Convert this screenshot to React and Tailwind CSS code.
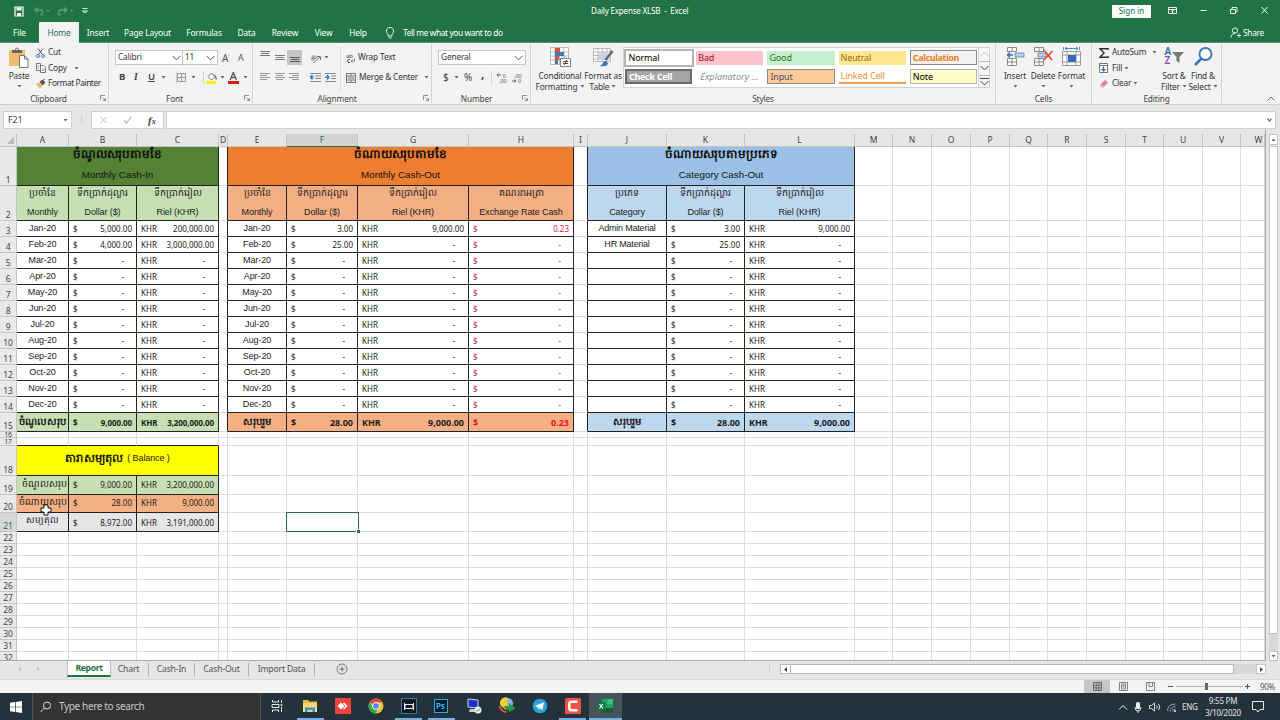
import clsx from 'clsx';

const GRID = 'grid grid-rows-1 grid-cols-[17px_52px_68px_82px_9px_59px_71px_111px_105px_14px_79px_78px_110px_38px_39px_39px_39px_38px_39px_39px_38px_39px_38px_24px]';
const LETTERS = 'ABCDEFGHIJKLMNOPQRSTUVW'.split('');
const MONTHS = ['Jan', 'Feb', 'Mar', 'Apr', 'May', 'Jun', 'Jul', 'Aug', 'Sep', 'Oct', 'Nov', 'Dec'];

const CASH_IN = [['5,000.00', '200,000.00'], ['4,000.00', '3,000,000.00']];
const CASH_OUT = [['3.00', '9,000.00', '0.23'], ['25.00', '-', '-']];
const CATEGORY = [['Admin Material', '3.00', '9,000.00'], ['HR Material', '25.00', '-']];

const TABS = [
  ['File', 'w-[39px]'],
  ['Home', 'w-[40px] bg-[#f3f3f3] text-[#217346]'],
  ['Insert', 'w-[38px]'],
  ['Page Layout', 'w-[61px]'],
  ['Formulas', 'w-[52px]'],
  ['Data', 'w-[33px]'],
  ['Review', 'w-[44px]'],
  ['View', 'w-[33px]'],
  ['Help', 'w-[36px]'],
];

const Icon = ({ w, h, children, className }) => (
  <svg width={w} height={h} viewBox={`0 0 ${w} ${h}`} fill="none" className={clsx('shrink-0', className)}>
    {children}
  </svg>
);

const Caret = ({ className }) => (
  <Icon w={5} h={3} className={className}>
    <path d="M0.5 0h4L2.5 2.5z" fill="#666" />
  </Icon>
);

const Chevron = ({ className }) => (
  <Icon w={9} h={6} className={className}>
    <path d="M0.5 0.8l4 4 4-4" stroke="#555" />
  </Icon>
);

const Launcher = () => (
  <Icon w={6} h={6} className="absolute right-[2px] bottom-[2px]">
    <path d="M0.5 5V0.5H5M2.5 2.5l3 3M5.5 3v2.5H3" stroke="#777" strokeWidth="0.8" />
  </Icon>
);

const Group = ({ label, className, launcher, labelClass, children }) => (
  <div className={clsx('relative flex flex-col h-[59px] border-r border-[#d2d2d2] shrink-0', className)}>
    <div className="flex h-[49px] shrink-0">{children}</div>
    <div className={clsx('pt-px text-center leading-[10px] text-[#444]', labelClass)}>{label}</div>
    {launcher && <Launcher />}
  </div>
);

const BigButton = ({ icon, lines, className, caret }) => (
  <div className={clsx('flex flex-col items-center shrink-0 leading-[11px] whitespace-nowrap', className)}>
    <div className="h-[26px] pt-[3px]">{icon}</div>
    <div>{lines[0]}</div>
    {lines[1] ? (
      <div className="flex items-center gap-[2px]">{lines[1]}<Caret /></div>
    ) : (
      caret && <Caret className="mt-[4px]" />
    )}
  </div>
);

const Lines = ({ rows, color = '#777' }) => (
  <Icon w={10} h={9}>
    {rows.map(([x, w], i) => (
      <rect key={i} x={x} y={i * 2} width={w} height="1" fill={color} />
    ))}
  </Icon>
);

const TitleBar = () => (
  <div className="flex h-[22px] items-center text-[8px] text-white">
    <Icon w={100} h={22}>
      <path d="M15 7h8v9h-8z" stroke="#fff" strokeWidth="1.2" />
      <path d="M16.5 7.5h5v3h-5zM17 13h4v3h-4z" fill="#fff" />
      <path d="M38 7.5L35 10l3 2.5M35.5 10h5q2 0 2 2.5t-2 2.5" stroke="#5f9c7a" strokeWidth="1.3" />
      <path d="M64 7.5l3 2.5-3 2.5M66.5 10h-5q-3 0-3 2.5t2 2.5" stroke="#5f9c7a" strokeWidth="1.3" />
      <path d="M46 10h4l-2 2zM69.5 10h4l-2 2z" fill="#5f9c7a" />
      <path d="M82.5 8.5h5M82.5 11h5L85 13z" stroke="#fff" strokeWidth="0.8" />
    </Icon>
    <div className="ml-[491px] w-[97px] whitespace-pre tracking-[-0.18px]">Daily Expense XLSB  -  Excel</div>
    <div className="ml-[424px] flex h-[13px] w-[39px] items-center justify-center bg-white text-[#217346]">Sign in</div>
    <Icon w={128} h={22}>
      <path d="M17.5 7.5h8v6h-8zM17 9.5h9M21.5 13v-3M20 11.5l1.5-1.5 1.5 1.5" stroke="#e6f0ea" />
      <path d="M49.5 10.5h6" stroke="#fff" />
      <path d="M79.5 9.5h5v4h-5zM81 9.5v-2h5V12h-1.5" stroke="#fff" strokeWidth="0.9" />
      <path d="M110.5 7l6 6.5M116.5 7l-6 6.5" stroke="#fff" />
    </Icon>
  </div>
);

const TabBar = () => (
  <div className="flex h-[21px] items-center text-[8.4px] tracking-[-0.15px] text-white">
    {TABS.map(([name, cls]) => (
      <div key={name} className={clsx('flex h-full items-center justify-center whitespace-nowrap pt-px', cls)}>{name}</div>
    ))}
    <Icon w={10} h={13} className="ml-[9px]">
      <path d="M3 8.5C0.5 6 1 1.5 5 1.5s4.500 4.500 2 7V10H3zM3.5 11.8h3" stroke="#fff" strokeWidth="0.9" />
    </Icon>
    <div className="ml-[8px] grow whitespace-nowrap pt-px tracking-[-0.4px]">Tell me what you want to do</div>
    <Icon w={11} h={11} className="mr-[2px]">
      <circle cx="5" cy="3.5" r="2.6" stroke="#fff" strokeWidth="0.9" />
      <path d="M1 10.5c0-3 2-4 4-4M7 8.5h4M9 6.5v4" stroke="#fff" strokeWidth="0.9" />
    </Icon>
    <div className="mr-[16px] pt-px tracking-[-0.3px]">Share</div>
  </div>
);

const ClipboardGroup = () => (
  <Group label="Clipboard" className="w-[109px]" labelClass="pr-[11px]" launcher>
    <BigButton
      className="ml-[6px] w-[26px]"
      lines={['Paste']}
      caret
      icon={
        <Icon w={20} h={21}>
          <rect x="0" y="3" width="16" height="16" fill="#edbd6b" />
          <path d="M3 3h10v3H3z" fill="#666" />
          <circle cx="8" cy="2.5" r="1.5" stroke="#666" />
          <path d="M10.5 8.5h5L19 12v8.5h-8.5zM15.5 8.5V12H19" fill="#fff" stroke="#777" />
        </Icon>
      }
    />
    <div className="ml-[4px] mt-[1px] flex flex-col whitespace-nowrap text-[#333]">
      <div className="flex h-[15px] items-center gap-[3px]">
        <Icon w={9} h={10}>
          <path d="M2 0.5l4.5 6M7 0.5l-4.5 6" stroke="#555" />
          <circle cx="2" cy="8" r="1.5" stroke="#4a78b0" />
          <circle cx="7" cy="8" r="1.5" stroke="#4a78b0" />
        </Icon>
        Cut
      </div>
      <div className="flex h-[16px] items-center gap-[2px]">
        <Icon w={10} h={10}>
          <path d="M0.5 0.5h4v7h-4zM4.5 2.5h3l2 2v5h-5z" fill="#fff" stroke="#777" />
          <path d="M1.5 3h2M1.5 5h2M6 6h2.5M6 7.5h2.5" stroke="#4a78b0" strokeWidth="0.7" />
        </Icon>
        Copy<Caret className="ml-[5px]" />
      </div>
      <div className="flex h-[15px] items-center gap-[2px] tracking-[-0.4px]">
        <Icon w={10} h={10}>
          <path d="M0 5l4-2 3 3-3 3.5z" fill="#edb66a" />
          <path d="M4 3l2-2 3 2-2 3zM7 1l2-1" fill="#555" stroke="#555" strokeWidth="0.8" />
        </Icon>
        Format Painter
      </div>
    </div>
  </Group>
);

const FontGroup = () => (
  <Group label="Font" className="w-[144px]" labelClass="pr-[12px]" launcher>
    <div className="ml-[6px] mt-[6px]">
      <div className="flex items-center">
        <div className="flex h-[15px] w-[68px] items-center justify-between border border-[#c6c6c6] bg-white pl-[2px] pr-[1px]">Calibri<Chevron /></div>
        <div className="flex h-[15px] w-[35px] items-center justify-between border border-l-0 border-[#c6c6c6] bg-white pl-[2px] pr-[2px]">11<Chevron /></div>
        <div className="ml-[4px] w-[16px] text-[10px] leading-none text-[#555]">A<sup className="text-[6px]">˄</sup></div>
        <div className="w-[12px] text-[9px] leading-none text-[#555]">A<sup className="text-[6px]">˅</sup></div>
      </div>
      <div className="mt-[5px] flex h-[15px] items-center text-[9.5px] text-[#444]">
        <b className="ml-[4px] w-[15px]">B</b>
        <i className="w-[14px] font-['Liberation_Serif',serif] font-bold">I</i>
        <u className="w-[13px] font-semibold">U</u>
        <Caret />
        <div className="ml-[10px] h-[13px] w-px bg-[#d2d2d2]" />
        <Icon w={9} h={9}>
          <path d="M0.5 0.5h8v8h-8zM4.5 0.5v8M0.5 4.5h8" stroke="#999" />
        </Icon>
        <Caret className="ml-[5px]" />
        <div className="ml-[7px] h-[13px] w-px bg-[#d2d2d2]" />
        <Icon w={11} h={12} className="ml-[2px]">
          <path d="M2 4.5L5.5 1 9 4.5 5.5 8z" fill="#fff" stroke="#777" />
          <path d="M8 3q2.5 1 2 4.5" stroke="#3f72b5" strokeWidth="1.3" />
          <rect y="9" width="10" height="3" fill="#ffee1a" />
        </Icon>
        <Caret className="ml-[3px]" />
        <Icon w={11} h={12} className="ml-[3px]">
          <path d="M2 8L5.300 0.500 8.5 8M3.300 5.500h4" stroke="#555" strokeWidth="1.3" />
          <rect y="9" width="11" height="3" fill="#d11a1a" />
        </Icon>
        <Caret className="ml-[4px]" />
      </div>
    </div>
  </Group>
);

const AlignmentGroup = () => (
  <Group label="Alignment" className="w-[179px]" labelClass="pr-[10px]" launcher>
    <div className="mt-[6px] w-[87px] shrink-0 pl-[7px]">
      <div className="flex h-[15px] items-center">
        <div className="-mt-[4px] w-[15px]"><Lines rows={[[0, 10], [1, 8], [0, 10]]} /></div>
        <div className="mt-[3px] w-[12px]"><Lines rows={[[0, 10], [1, 8], [0, 10]]} /></div>
        <div className="flex h-[15px] w-[15px] items-end justify-center bg-[#c5c5c5] pb-px"><Lines rows={[[0, 0], [0, 10], [1, 8], [0, 10]]} color="#555" /></div>
        <Icon w={12} h={12} className="ml-[8px]">
          <text x="1" y="7" fontSize="6" fill="#444" transform="rotate(-35 5 7)">ab</text>
          <path d="M3 11l7-6M10.5 8V4.5H7" stroke="#777" />
        </Icon>
        <Caret className="ml-[2px]" />
      </div>
      <div className="mt-[5px] flex h-[15px] items-center">
        <div className="w-[15px]"><Lines rows={[[0, 10], [0, 7], [0, 10], [0, 7], [0, 0]]} color="#999" /></div>
        <div className="w-[14px]"><Lines rows={[[0, 10], [1, 7], [0, 10], [1, 7], [0, 0]]} color="#999" /></div>
        <div className="w-[21px]"><Lines rows={[[0, 10], [3, 7], [0, 10], [3, 7], [0, 0]]} color="#999" /></div>
        <Icon w={11} h={9}>
          <path d="M0 0.5h11M5 3h6M5 5.5h6M0 8.5h11" stroke="#888" />
          <path d="M0 4.2h4M2.5 2L0.5 4.2l2 2.3" stroke="#2f6db5" strokeWidth="1.2" />
        </Icon>
        <Icon w={11} h={9} className="ml-[4px]">
          <path d="M0 0.5h11M6 3h5M6 5.5h5M0 8.5h11" stroke="#888" />
          <path d="M0 4.2h4M2 2l2 2.2-2 2.3" stroke="#2f6db5" strokeWidth="1.2" />
        </Icon>
      </div>
    </div>
    <div className="mt-[3px] h-[45px] w-px bg-[#dcdcdc]" />
    <div className="ml-[5px] mt-[6px] whitespace-nowrap">
      <div className="flex h-[15px] items-center gap-[3px]">
        <Icon w={9} h={12}>
          <text x="0.5" y="5.5" fontSize="5.5" fill="#444">ab</text>
          <path d="M4 7.5q-2.500-0.500-2.500 1.500t2.500 1.500" stroke="#444" strokeWidth="0.9" />
          <path d="M8.5 6.5V9H5.5M6.500 7.500L5 9l1.500 1.500" stroke="#2f6db5" strokeWidth="0.8" />
        </Icon>
        Wrap Text
      </div>
      <div className="mt-[5px] flex h-[15px] items-center gap-[3px] tracking-[-0.2px]">
        <Icon w={10} h={10}>
          <path d="M0.5 0.5h9v9h-9zM0.5 3h9M0.5 7h9M5 0.5V3M5 7v2.5" stroke="#777" />
          <path d="M2 5h6" stroke="#2f6db5" />
        </Icon>
        Merge &amp; Center<Caret className="ml-[3px]" />
      </div>
    </div>
  </Group>
);

const NumberGroup = () => (
  <Group label="Number" className="w-[99px]" labelClass="pr-[9px]" launcher>
    <div className="ml-[6px] mt-[6px]">
      <div className="flex h-[15px] w-[88px] items-center justify-between border border-[#c6c6c6] bg-white pl-[2px] pr-[2px]">General<Chevron /></div>
      <div className="mt-[5px] flex h-[15px] items-center text-[10px] text-[#444]">
        <span className="ml-[5px] w-[11px]">$</span><Caret />
        <span className="ml-[5px] w-[17px]">%</span>
        <b className="w-[10px] -mt-[7px] text-[12px]">,</b>
        <div className="mr-[5px] h-[13px] w-px bg-[#d2d2d2]" />
        <Icon w={11} h={12} className="tracking-normal">
          <path d="M0 3h4M1.5 1.5L0 3l1.5 1.5" stroke="#2f6db5" />
          <text x="5.5" y="5.5" fontSize="5.5" fill="#555">0</text>
          <text x="2" y="11" fontSize="5.5" fill="#555">.00</text>
        </Icon>
        <Icon w={12} h={12} className="ml-[4px] tracking-normal">
          <text x="2" y="5.5" fontSize="5.5" fill="#555">.00</text>
          <path d="M0 9h4M2.5 7.5L4 9l-1.5 1.5" stroke="#2f6db5" />
          <text x="6" y="11" fontSize="5.5" fill="#555">0</text>
        </Icon>
      </div>
    </div>
  </Group>
);

const STYLES = [
  ['Normal', 'border-2 border-[#b5b5b5] bg-white text-black h-[18px] w-[70px] -mx-[1.5px] px-[3px]'],
  ['Bad', 'bg-[#ffc1cb] text-[#a3152a] h-[14px]'],
  ['Good', 'bg-[#c6efce] text-[#1c7328] h-[14px]'],
  ['Neutral', 'bg-[#ffe794] text-[#9a6712] h-[14px]'],
  ['Calculation', 'border border-[#8a8a8a] bg-[#f2f2f2] font-bold tracking-[-0.4px] text-[#ee7f20] h-[15px]'],
  ['Check Cell', 'border-2 border-[#6a6a6a] bg-[#a5a5a5] font-bold tracking-[-0.3px] text-white h-[15px]'],
  ['Explanatory ...', 'italic tracking-[0.1px] text-[#8a8a8a] h-[14px] pl-[4px]'],
  ['Input', 'border border-[#8a8a8a] bg-[#ffcc99] text-[#4c4c76] h-[15px]'],
  ['Linked Cell', 'border-b-2 border-[#ee9f4c] text-[#ee8f30] h-[15px]'],
  ['Note', 'border border-[#b5b5b5] bg-[#ffffcc] text-black h-[15px]'],
];

const StylesGroup = () => (
  <Group label="Styles" className="w-[465px]">
    <BigButton
      className="ml-[5px] w-[48px]"
      lines={['Conditional', 'Formatting']}
      icon={
        <Icon w={21} h={21}>
          <path d="M0.5 0.5h18v17h-18zM5 0.5v17M9.5 0.5v17M14 0.5v17M0.5 5h18M0.5 9h18M0.5 13h18" fill="#fff" stroke="#aaa" strokeWidth="0.8" />
          <path d="M5 1h5v4H5zM5 9h4v4H5z" fill="#d9532f" />
          <path d="M5 5h9v4H5zM5 13h3v4H5z" fill="#3f78bf" />
          <rect x="10.5" y="11.5" width="10" height="8" fill="#fff" stroke="#888" />
          <path d="M13 14.5h5M13 16.5h5M17 13l-3 5" stroke="#333" strokeWidth="0.9" />
        </Icon>
      }
    />
    <BigButton
      className="w-[38px]"
      lines={['Format as', 'Table']}
      icon={
        <Icon w={21} h={21}>
          <path d="M0.5 1.5h17v13h-17zM5 1.5v13M9.5 1.5v13M14 1.5v13M0.5 5h17M0.5 8.5h17M0.5 12h17" fill="#fff" stroke="#aaa" strokeWidth="0.8" />
          <path d="M5 5h9v7H5z" fill="#c3d4ea" />
          <path d="M19.5 4l-7 9" stroke="#666" strokeWidth="2.5" />
          <path d="M6 19q4-1 4-4l3-1 2 2q0 4-9 3z" fill="#3f78bf" />
        </Icon>
      }
    />
    <div className="ml-[1px] mt-[3px] flex h-[41px] w-[367px] border border-[#d2d2d2] bg-white">
      <div className="grid h-[39px] w-[355px] grid-cols-5 grid-rows-[19px_19px] items-center gap-x-[4px] px-[1px] text-[9px] leading-none">
        {STYLES.map(([name, cls]) => (
          <div key={name} className={clsx('flex items-center whitespace-nowrap px-[2px]', cls)}>{name}</div>
        ))}
      </div>
      <div className="flex w-[11px] flex-col items-center border-l border-[#d2d2d2] bg-[#f6f6f6]">
        <Icon w={9} h={13}><path d="M0.5 8l4-4 4 4" stroke="#c5c5c5" /></Icon>
        <Icon w={11} h={14}><path d="M0 0.5h11" stroke="#bbb" /><path d="M1.5 5l4 4 4-4" stroke="#444" /></Icon>
        <Icon w={11} h={12}><path d="M0 0.5h11" stroke="#bbb" /><path d="M1 3.5h9M1.5 6l4 4 4-4" stroke="#444" /></Icon>
      </div>
    </div>
  </Group>
);

const CellsGroup = () => (
  <Group label="Cells" className="w-[96px]">
    <BigButton
      className="ml-[4px] w-[30px]" lines={['Insert']} caret
      icon={
        <Icon w={19} h={20}>
          <path d="M1.5 0.5h9v4h-9zM6 0.5v4M1.5 11.5h9v7h-9zM6 11.5v7M1.5 15h9" fill="#fff" stroke="#888" />
          <path d="M9 6h9v4H9z" fill="#b9cfeb" stroke="#7a8fb0" />
          <path d="M1 8h6M4 5.5L1.5 8 4 10.5" stroke="#2f6db5" strokeWidth="1.3" />
        </Icon>
      }
    />
    <BigButton
      className="w-[26px]" lines={['Delete']} caret
      icon={
        <Icon w={20} h={20}>
          <path d="M1.5 0.5h9v4h-9zM6 0.5v4M1.5 11.5h9v7h-9zM6 11.5v7M1.5 15h9" fill="#fff" stroke="#888" />
          <path d="M5 6h8v4H5z" fill="#b9cfeb" stroke="#7a8fb0" />
          <path d="M11 3l8 10M19.5 4L11 13" stroke="#e04a28" strokeWidth="1.5" />
        </Icon>
      }
    />
    <BigButton
      className="w-[31px]" lines={['Format']} caret
      icon={
        <Icon w={20} h={20}>
          <path d="M0.5 4.5h18v14h-18zM5 4.5v14M14 4.5v14M0.5 8h18M0.5 15h18" fill="#fff" stroke="#999" />
          <rect x="6" y="8" width="8" height="7" fill="#2f6db5" />
          <path d="M3 1.5h13M5 0L3 1.5 5 3M14 0l2 1.5L14 3M1.5 0v3M17.5 0v3" stroke="#2f6db5" strokeWidth="0.8" />
        </Icon>
      }
    />
  </Group>
);

const EditingGroup = () => (
  <Group label="Editing" className="w-[130px]">
    <div className="ml-[7px] mt-[1px] w-[60px] whitespace-nowrap">
      <div className="flex h-[15px] items-center tracking-[-0.25px]">
        <Icon w={10} h={10} className="mr-[3px]"><path d="M9 2V0.7H1L5 5 1 9.3h8V8" stroke="#333" strokeWidth="1.4" /></Icon>
        AutoSum<Caret className="ml-[6px]" />
      </div>
      <div className="flex h-[16px] items-center">
        <Icon w={10} h={10} className="mr-[3px]"><path d="M0.5 0.5h8v9h-8zM0.5 2.5h8" fill="#fff" stroke="#777" /><path d="M4.5 3.5V8M2.5 6l2 2 2-2" stroke="#2f6db5" strokeWidth="1.2" /></Icon>
        Fill<Caret className="ml-[2px]" />
      </div>
      <div className="flex h-[15px] items-center">
        <Icon w={10} h={10} className="mr-[3px]"><path d="M0.5 6.5L6 1l3 2.5L3.5 9z" fill="#e8799a" /><path d="M0.5 6.5L2 5l3 2.5L3.5 9z" fill="#f4b0c2" /></Icon>
        Clear<Caret className="ml-[2px]" />
      </div>
    </div>
    <BigButton
      className="w-[30px]" lines={['Sort &', 'Filter']}
      icon={
        <div className="flex">
          <div className="flex w-[7px] flex-col text-[10px] font-semibold leading-[9px]">
            <span className="text-[#2f6db5]">A</span>
            <span className="text-[#8a4fa8]">Z</span>
          </div>
          <Icon w={12} h={18}><path d="M0 5h12l-4.500 5v6l-3-2v-4z" fill="#777" /></Icon>
        </div>
      }
    />
    <BigButton
      className="w-[28px]" lines={['Find &', 'Select']}
      icon={
        <Icon w={19} h={19}>
          <circle cx="11.5" cy="7" r="6" stroke="#3b76b9" strokeWidth="1.8" fill="#fff" />
          <path d="M7.5 11.5L1 18" stroke="#3b76b9" strokeWidth="2.5" />
        </Icon>
      }
    />
  </Group>
);

const Ribbon = () => (
  <div className="flex h-[62px] shrink-0 border-b border-[#d0d0d0] bg-[#f3f3f3] pt-px text-[8.3px] tracking-[-0.15px] text-[#333]">
    <ClipboardGroup />
    <FontGroup />
    <AlignmentGroup />
    <NumberGroup />
    <StylesGroup />
    <CellsGroup />
    <EditingGroup />
    <div className="flex grow items-end justify-end pb-[3px] pr-[5px]">
      <Icon w={8} h={5}><path d="M0.5 4.5L4 1l3.5 3.5" stroke="#666" /></Icon>
    </div>
  </div>
);

const FormulaBar = () => (
  <div className="flex h-[25px] shrink-0 items-start bg-[#e6e6e6] pl-[3px] pt-[6px] text-[9px] text-[#444]">
    <div className="flex h-[18px] w-[69px] items-center justify-between border border-[#cfcfcf] bg-white pl-[4px] pr-[3px] tracking-[-0.2px]">F21<Caret /></div>
    <Icon w={19} h={10} className="mt-[4px]"><path d="M9.5 1v8" stroke="#aaa" strokeDasharray="1 1.5" /></Icon>
    <div className="flex h-[18px] w-[73px] items-center border border-[#cfcfcf] bg-white">
      <Icon w={40} h={10} className="ml-[8px]">
        <path d="M0.5 2l6 6M6.5 2l-6 6" stroke="#b5b5b5" />
        <path d="M24 5.5L26.5 8l5-6.5" stroke="#b5b5b5" strokeWidth="1.2" />
      </Icon>
      <i className="ml-[8px] font-['Liberation_Serif',serif] text-[11px] font-bold leading-none">f<span className="text-[8px]">x</span></i>
    </div>
    <div className="ml-[2px] flex h-[18px] w-[1110px] items-center justify-end border border-[#cfcfcf] bg-white pr-[3px]">
      <Icon w={5} h={4}><path d="M0.5 0.5l2 2.5 2-2.5" stroke="#555" strokeWidth="1.2" /></Icon>
    </div>
  </div>
);

const Head = ({ n, active }) => (
  <div className={clsx('flex items-end justify-center overflow-hidden border-b border-r border-[#c4c4c4] font-["Noto_Sans"] text-[8.5px] font-normal leading-[10px] tracking-[-0.2px]', active ? 'bg-[#d6d6d6] text-[#217346]' : 'bg-[#e9e9e9] text-[#444]')}>{n}</div>
);

const INK = 'border-b border-r border-[#222]';

const Blank = ({ n, className }) =>
  Array.from({ length: n }, (_, i) => <div key={i} className={clsx('border-b border-r', className || 'border-[#dcdcdc]')} />);

// narrow spacer column; its right edge is the left frame of the next table
const Gap = () => <div className="border-b border-r border-b-[#dcdcdc] border-r-[#222]" />;

const Label = ({ children, className }) => (
  <div className={clsx('flex items-center justify-center whitespace-nowrap', INK, className)}>{children}</div>
);

const Money = ({ unit, value, className, big, pad = 'pr-[12px]' }) => (
  <div className={clsx('flex items-center justify-between whitespace-nowrap pl-[4px] font-["Noto_Sans"] leading-none', big ? 'text-[9px]' : 'pt-px text-[8px]', value === '-' ? pad : 'pr-[4px]', INK, className)}>
    <span>{unit}</span>
    <span>{value}</span>
  </div>
);

const Title = ({ kh, en, className }) => (
  <div className={clsx('flex flex-col items-center text-[9.8px] leading-[21px] text-[#111]', INK, className)}>
    <b className="-mt-[3px] h-[20px] shrink-0 text-[12px]">{kh}</b>
    <span>{en}</span>
  </div>
);

const Header = ({ kh, en, className }) => (
  <Label className={clsx('flex-col', className)}>
    <span className="h-[17px] text-[9.5px] leading-[13px]">{kh}</span>
    <span className="h-[17px] pt-px leading-[17px] tracking-[-0.1px]">{en}</span>
  </Label>
);

const Sheet = () => (
  <div className="relative flex h-[531px] w-[1280px] shrink-0 overflow-hidden bg-[#e6e6e6] font-['Liberation_Sans',sans-serif] text-[9px] text-[#1c1c1c]">
    <div className="w-[1266px] shrink-0 overflow-hidden border-b border-r border-[#a9a9a9]">
      {/* Column letters */}
      <div className={clsx(GRID, 'h-[17px] pt-[4px] font-["Noto_Sans"]')}>
        <div className="flex items-end justify-end border-b border-r border-[#c4c4c4] p-[2px]">
          <Icon w={7} h={7}><path d="M7 0v7H0z" fill="#b9b9b9" /></Icon>
        </div>
        {LETTERS.map((l) => (
          <div key={l} className={clsx('flex items-center justify-center border-b border-r text-[8.5px] leading-none', l === 'F' ? 'border-b-[#217346] border-r-[#c4c4c4] bg-[#d2d2d2] text-[#217346]' : 'border-[#c4c4c4] text-[#444]', l === 'W' && 'pl-[12px]')}>{l}</div>
        ))}
      </div>
      <div className="bg-white">
        <div className={clsx(GRID, 'h-[39px]')}>
          <Head n={1} />
          <Title className="col-span-3 bg-[#548235]" kh="ចំណូលសរុបតាមខែ" en="Monthly Cash-In" />
          <Gap />
          <Title className="col-span-4 bg-[#ed7d31]" kh="ចំណាយសរុបតាមខែ" en="Monthly Cash-Out" />
          <Gap />
          <Title className="col-span-3 bg-[#9bc2e6]" kh="ចំណាយសរុបតាមប្រភេទ" en="Category Cash-Out" />
          <Blank n={11} />
        </div>
        <div className={clsx(GRID, 'h-[35px]')}>
          <Head n={2} />
          <Header className="bg-[#c6e0b4]" kh="ប្រចាំខែ" en="Monthly" />
          <Header className="bg-[#c6e0b4]" kh="ទឹកប្រាក់ដុល្លារ" en="Dollar ($)" />
          <Header className="bg-[#c6e0b4]" kh="ទឹកប្រាក់រៀល" en="Riel (KHR)" />
          <Gap />
          <Header className="bg-[#f4b084]" kh="ប្រចាំខែ" en="Monthly" />
          <Header className="bg-[#f4b084]" kh="ទឹកប្រាក់ដុល្លារ" en="Dollar ($)" />
          <Header className="bg-[#f4b084]" kh="ទឹកប្រាក់រៀល" en="Riel (KHR)" />
          <Header className="bg-[#f4b084]" kh="គណនាអត្រា" en="Exchange Rate Cash" />
          <Gap />
          <Header className="bg-[#bdd7ee]" kh="ប្រភេទ" en="Category" />
          <Header className="bg-[#bdd7ee]" kh="ទឹកប្រាក់ដុល្លារ" en="Dollar ($)" />
          <Header className="bg-[#bdd7ee]" kh="ទឹកប្រាក់រៀល" en="Riel (KHR)" />
          <Blank n={11} />
        </div>
        {MONTHS.map((m, i) => {
          const cin = CASH_IN[i] || ['-', '-'];
          const out = CASH_OUT[i] || ['-', '-', '-'];
          const cat = CATEGORY[i] || ['', '-', '-'];
          return (
            <div key={m} className={clsx(GRID, 'h-[16px]')}>
              <Head n={i + 3} />
              <Label className="tracking-[-0.1px]">{m}-20</Label>
              <Money unit="$" value={cin[0]} />
              <Money unit="KHR" value={cin[1]} pad="pr-[13px]" />
              <Gap />
              <Label className="tracking-[-0.1px]">{m}-20</Label>
              <Money unit="$" value={out[0]} />
              <Money unit="KHR" value={out[1]} pad="pr-[13px]" />
              <Money unit="$" value={out[2]} className="text-[#d8203a]" />
              <Gap />
              <Label className="tracking-[-0.2px]">{cat[0]}</Label>
              <Money unit="$" value={cat[1]} />
              <Money unit="KHR" value={cat[2]} pad="pr-[13px]" />
              <Blank n={11} />
            </div>
          );
        })}
        {/* Totals */}
        <div className={clsx(GRID, 'h-[19px] font-bold')}>
          <Head n={15} />
          <Label className="bg-[#c6e0b4] text-[10px] pb-px">ចំណូលសរុប</Label>
          <Money unit="$" value="9,000.00" className="bg-[#c6e0b4] tracking-[-0.1px]" />
          <Money unit="KHR" value="3,200,000.00" className="bg-[#c6e0b4] tracking-[-0.1px]" />
          <Gap />
          <Label className="bg-[#f4b084] text-[10px] pb-px">សរុបរួម</Label>
          <Money big unit="$" value="28.00" className="bg-[#f4b084]" />
          <Money big unit="KHR" value="9,000.00" className="bg-[#f4b084]" />
          <Money big unit="$" value="0.23" className="bg-[#f4b084] text-[#e8102c]" />
          <Gap />
          <Label className="bg-[#bdd7ee] text-[10px] pb-px">សរុបរួម</Label>
          <Money big unit="$" value="28.00" className="bg-[#bdd7ee]" />
          <Money big unit="KHR" value="9,000.00" className="bg-[#bdd7ee]" />
          <Blank n={11} />
        </div>
        <div className={clsx(GRID, 'h-[6px] overflow-hidden')}>
          <Head n={<span className="h-[5px] overflow-hidden text-[7px] leading-[5px]">16</span>} /><Blank n={23} />
        </div>
        <div className={clsx(GRID, 'h-[8px] overflow-hidden')}>
          <Head n={<span className="h-[7px] overflow-hidden text-[7px] leading-[7px]">17</span>} /><Blank n={3} className="border-b-[#222] border-r-[#dcdcdc]" /><Blank n={20} />
        </div>
        {/* Balance */}
        <div className={clsx(GRID, 'h-[30px]')}>
          <Head n={18} />
          <Label className="col-span-3 gap-[4px] bg-[#ffff00] pb-[3px]"><b className="text-[11.5px]">តារាសម្យតុល</b><span className="tracking-[-0.1px]">( Balance )</span></Label>
          <Blank n={20} />
        </div>
        <div className={clsx(GRID, 'h-[19px]')}>
          <Head n={19} />
          <Label className="justify-end bg-[#c6e0b4] pb-[2px] pr-[1px] text-[9.5px]">ចំណូលសរុប</Label>
          <Money unit="$" value="9,000.00" className="bg-[#c6e0b4] pb-[2px]" />
          <Money unit="KHR" value="3,200,000.00" className="bg-[#c6e0b4] pb-[2px]" />
          <Blank n={20} />
        </div>
        <div className={clsx(GRID, 'h-[18px]')}>
          <Head n={20} />
          <Label className="justify-end bg-[#f4b084] pb-[2px] pr-[1px] text-[9.5px]">ចំណាយសរុប</Label>
          <Money unit="$" value="28.00" className="bg-[#f4b084] pb-[2px]" />
          <Money unit="KHR" value="9,000.00" className="bg-[#f4b084] pb-[2px]" />
          <Blank n={20} />
        </div>
        <div className={clsx(GRID, 'h-[19px]')}>
          <Head n={21} active />
          <Label className="bg-[#e7e6e6] pb-[2px]">សម្យតុល</Label>
          <Money unit="$" value="8,972.00" className="bg-[#e7e6e6]" />
          <Money unit="KHR" value="3,191,000.00" className="bg-[#e7e6e6]" />
          <Blank n={2} />
          <div className="relative">
            <div className="absolute -top-px -left-px h-[20px] w-[73px] border border-[#217346]">
              <div className="absolute -right-[2px] -bottom-[2px] h-[4px] w-[4px] border-l border-t border-white bg-[#217346]" />
            </div>
          </div>
          <Blank n={17} />
        </div>
        {Array.from({ length: 11 }, (_, i) => (
          <div key={i} className={clsx(GRID, 'h-[12px]')}>
            <Head n={i + 22} /><Blank n={23} />
          </div>
        ))}
      </div>
    </div>
    {/* Vertical scroll bar */}
    <div className="flex grow flex-col items-center pl-[1px] pt-[4px]">
      <div className="flex h-[11px] w-[9px] items-center justify-center border border-[#c4c4c4] bg-white">
        <Icon w={5} h={3}><path d="M0.5 3h4l-2-2.5z" fill="#666" /></Icon>
      </div>
      <div className="mt-px h-[488px] w-[9px] border border-[#c4c4c4] bg-white" />
      <div className="h-[17px] w-[9px] bg-[#d8d8d8]" />
      <div className="flex h-[10px] w-[9px] items-center justify-center border border-[#c4c4c4] bg-white"><Caret /></div>
    </div>
    {/* Mouse pointer */}
    <Icon w={12} h={12} className="absolute left-[40px] top-[374px]">
      <path d="M4 1h4v3h3v4H8v3H4V8H1V4h3z" fill="#fff" stroke="#111" />
    </Icon>
  </div>
);

const SheetTabs = () => (
  <div className="flex h-[18px] shrink-0 items-start bg-[#e6e6e6] text-[8.7px] text-[#555]">
    <Icon w={67} h={17}><path d="M21 6v4l-3-2zM37 6v4l3-2z" fill="#bdbdbd" /></Icon>
    <div className="-mt-px flex h-[17px] w-[44px] items-center justify-center border-b-2 border-x border-x-[#bbb] border-b-[#217346] bg-white pt-[3px] font-bold tracking-[-0.4px] text-[#217346]">Report</div>
    {[['Chart', 'w-[38px]'], ['Cash-In', 'w-[46px]'], ['Cash-Out', 'w-[54px]'], ['Import Data', 'w-[66px]']].map(([name, w]) => (
      <div key={name} className={clsx('mt-[2px] flex h-[13px] items-center justify-center border-r tracking-[-0.2px]', w, name === 'Chart' ? 'pr-[2px] border-[#b0b0b0]' : 'border-[#b0b0b0]')}>{name}</div>
    ))}
    <Icon w={12} h={12} className="ml-[21px] mt-[2px]">
      <circle cx="6" cy="6" r="5" stroke="#777" /><path d="M6 3.5v5M3.5 6h5" stroke="#666" />
    </Icon>
    <Icon w={3} h={8} className="ml-[420px] mt-[4px]"><path d="M1.5 0v8" stroke="#aaa" strokeDasharray="1 1.5" /></Icon>
    <div className="ml-[9px] mt-[3px] flex h-[10px]">
      <div className="flex w-[11px] items-center justify-center border border-[#b8b8b8] bg-white"><Icon w={3} h={5}><path d="M3 0v5L0 2.5z" fill="#444" /></Icon></div>
      <div className="w-[443px] border border-l-0 border-[#b8b8b8] bg-white" />
      <div className="w-[22px] bg-[#d8d8d8]" />
      <div className="flex w-[10px] items-center justify-center border border-[#c4c4c4] bg-white"><Icon w={3} h={5}><path d="M0 0v5l3-2.5z" fill="#444" /></Icon></div>
    </div>
  </div>
);

const StatusBar = () => (
  <div className="flex h-[14px] shrink-0 items-center justify-end border-t border-[#d8d8d8] bg-[#f3f3f3] pr-[5px] text-[8px] tracking-[-0.3px] text-[#555]">
    <div className="flex h-[13px] w-[26px] items-center justify-center bg-[#c6c6c6]">
      <Icon w={9} h={9}><path d="M0.5 0.5h8v8h-8zM3.2 0.5v8M5.9 0.5v8M0.5 3.2h8M0.5 5.9h8" stroke="#555" strokeWidth="0.8" /></Icon>
    </div>
    <Icon w={9} h={9} className="ml-[9px]"><path d="M0.5 0.5h8v8h-8zM2.5 2h4v5h-4zM3.5 3.5h2M3.5 5h2" stroke="#666" strokeWidth="0.8" /></Icon>
    <Icon w={9} h={9} className="ml-[18px]"><path d="M0.5 0.5h8v8h-8zM3 0.5v4h3.5v-4" stroke="#666" strokeWidth="0.8" /></Icon>
    <Icon w={88} h={11} className="ml-[11px]">
      <path d="M2 5.5h5M79 5.5h5M81.5 3v5" stroke="#555" />
      <path d="M10 5.5h67" stroke="#aaa" strokeWidth="0.8" />
      <rect x="39" y="2" width="3" height="7" fill="#666" />
    </Icon>
    <div className="ml-[6px] w-[15px] whitespace-nowrap">90%</div>
  </div>
);

const TaskApp = ({ open, active, children }) => (
  <div className={clsx('flex w-[32.8px] shrink-0 flex-col items-center justify-between', active && 'bg-[#46545b]')}>
    <div className="flex h-[25px] items-center justify-center"><Icon w={18} h={18}>{children}</Icon></div>
    {open && <div className={clsx('h-[2px] bg-[#76b0e6]', active ? 'w-full' : 'w-[27px]')} />}
  </div>
);

const Taskbar = () => (
  <div className="flex h-[27px] shrink-0 bg-[#24323b] text-[#e8e8e8]">
    <div className="flex w-[32px] items-center justify-center">
      <Icon w={12} h={12}><path d="M0 1.7L5 1v4.7H0zM5.7 0.9L12 0v5.7H5.7zM0 6.3h5V11l-5-.7zM5.7 6.3H12V12l-6.3-.9z" fill="#fff" /></Icon>
    </div>
    <div className="flex w-[229px] items-center border-x border-[#46525a] bg-[#333333] text-[10px] text-[#c8c8c8]">
      <Icon w={12} h={12} className="ml-[7px]"><circle cx="7" cy="4.5" r="3.5" stroke="#ddd" /><path d="M4.5 7l-4 4" stroke="#ddd" /></Icon>
      <span className="ml-[7px] whitespace-nowrap tracking-[-0.35px]">Type here to search</span>
    </div>
    <div className="flex">
      <TaskApp><path d="M4.5 3v2h6V3M4.5 15v-2h6v2M4 7.5h7v3H4zM13.5 3v3M13.5 10v5" stroke="#e8e8e8" /><circle cx="13.5" cy="8" r="1" fill="#e8e8e8" /></TaskApp>
      <TaskApp open>
        <path d="M2 3h5l1.5 1.5H16V15H2z" fill="#eab83c" /><path d="M2 6h14v9H2z" fill="#fbd971" /><path d="M4 15v-4.500h10V15h-2.500v-2h-5v2z" fill="#3d8fd6" />
      </TaskApp>
      <TaskApp><rect x="1" y="1" width="16" height="16" fill="#ef443b" /><path d="M3.500 9l3.500-3.500L10.500 9 7 12.500z" fill="#fff" /><path d="M9.500 6l3 3-3 3" stroke="#fff" strokeWidth="1.5" /></TaskApp>
      <TaskApp>
        <circle cx="9" cy="9" r="7.5" fill="#f3c42b" />
        <path d="M9 9L2.5 5.25A7.5 7.5 0 0 1 15.5 5.25L9 5.5z" fill="#e04434" />
        <path d="M2.5 5.25A7.5 7.5 0 0 0 8.5 16.5L11.5 11 6 10.5z" fill="#2fa453" />
        <circle cx="9" cy="9" r="3.5" fill="#4a8bf0" stroke="#fff" />
      </TaskApp>
      <TaskApp open><rect x="1.5" y="1.5" width="15" height="15" fill="#111a20" stroke="#2b7d98" /><path d="M5 7.500h8v4H5zM4.500 6v7M13.500 6v7" stroke="#eee" /></TaskApp>
      <TaskApp open><rect x="2.5" y="2.5" width="13" height="13" fill="#071c2c" stroke="#2fa9e0" /><text x="4" y="12" fontSize="8" fontWeight="600" fill="#45c3f5">Ps</text></TaskApp>
      <TaskApp>
        <path d="M3 2l10 1v8L3 10z" fill="#1c31c9" stroke="#cfd5e8" /><path d="M5 12h8l2 3H4z" fill="#c6cad4" /><circle cx="13" cy="13" r="3.5" fill="#e9ecea" /><path d="M11.5 13l1.2 1.2 2-2.5" stroke="#5a8a60" />
      </TaskApp>
      <TaskApp>
        <circle cx="9.5" cy="6.5" r="5.5" fill="#8db7e0" /><path d="M10 1a5.5 5.5 0 0 0-7 8l5 4z" fill="#f3cf2f" /><path d="M2 8q2 6 8 6.5L8 16q-6-1-7-6z" fill="#e0562d" /><path d="M6 9h5V6l6.5 5.5L11 15v-2q-4 0-5-4z" fill="#2f9a3b" />
      </TaskApp>
      <TaskApp><circle cx="9" cy="9" r="7.3" fill="#2ba0da" /><path d="M4 9l9-3.8-1.6 8-2.7-2-1.4 1.4L7 10.5z" fill="#fff" /></TaskApp>
      <TaskApp open><rect x="1" y="1" width="16" height="16" rx="1" fill="#f05045" /><path d="M13.5 4.8h-6q-2.2 0-2.2 2.2v4q0 2.2 2.2 2.2h6" stroke="#fff" strokeWidth="2.5" /></TaskApp>
      <TaskApp open active>
        <rect x="6" y="2" width="11" height="14" rx="1" fill="#21a366" /><path d="M11.5 2H17v5h-5.5z" fill="#33c481" /><path d="M6 11h11v5H6z" fill="#185c37" /><rect x="1" y="5" width="8.5" height="8.5" rx="0.8" fill="#107c41" /><path d="M3.5 7L7 11.5M7 7l-3.5 4.5" stroke="#fff" strokeWidth="1.2" />
      </TaskApp>
    </div>
    <div className="flex grow items-center justify-end pr-[16px] text-[8px] tracking-[-0.25px]">
      <Icon w={60} h={14}>
        <path d="M1 9.5l4-4 4 4" stroke="#eee" />
        <rect x="18" y="2" width="4" height="7" rx="1.5" fill="#eee" /><path d="M17 7q0 4 3 4t3-4M20 11v2" stroke="#eee" />
        <path d="M31.5 5.5h2l3-2.5v8l-3-2.5h-2zM38.5 5.5q1.5 1.5 0 3M40.5 4q2.5 3 0 6" stroke="#eee" strokeWidth="0.9" />
        <path d="M49.5 11q0-7 8-7M52 11.5q0-4.5 5.5-5M54.5 11.5q0-2.5 3-2.5" stroke="#aab" strokeWidth="0.9" /><circle cx="57" cy="11" r="1" fill="#eee" />
      </Icon>
      <div className="ml-[4px] w-[17px]">ENG</div>
      <div className="ml-[5px] w-[38px] text-center leading-[12px]"><div>9:55 PM</div><div>3/10/2020</div></div>
      <Icon w={12} h={12} className="ml-[10px]"><path d="M0.5 0.5h11v8H8L6 11 4 8.5H0.5z" stroke="#eee" /></Icon>
    </div>
  </div>
);

export default function App() {
  return (
    <div className="flex h-[720px] w-[1280px] flex-col overflow-hidden bg-white font-['Noto_Sans',sans-serif]">
      <div className="h-[43px] shrink-0 border-b border-[#4f9370] bg-[#217346]">
        <TitleBar />
        <TabBar />
      </div>
      <Ribbon />
      <FormulaBar />
      <Sheet />
      <SheetTabs />
      <StatusBar />
      <Taskbar />
    </div>
  );
}
